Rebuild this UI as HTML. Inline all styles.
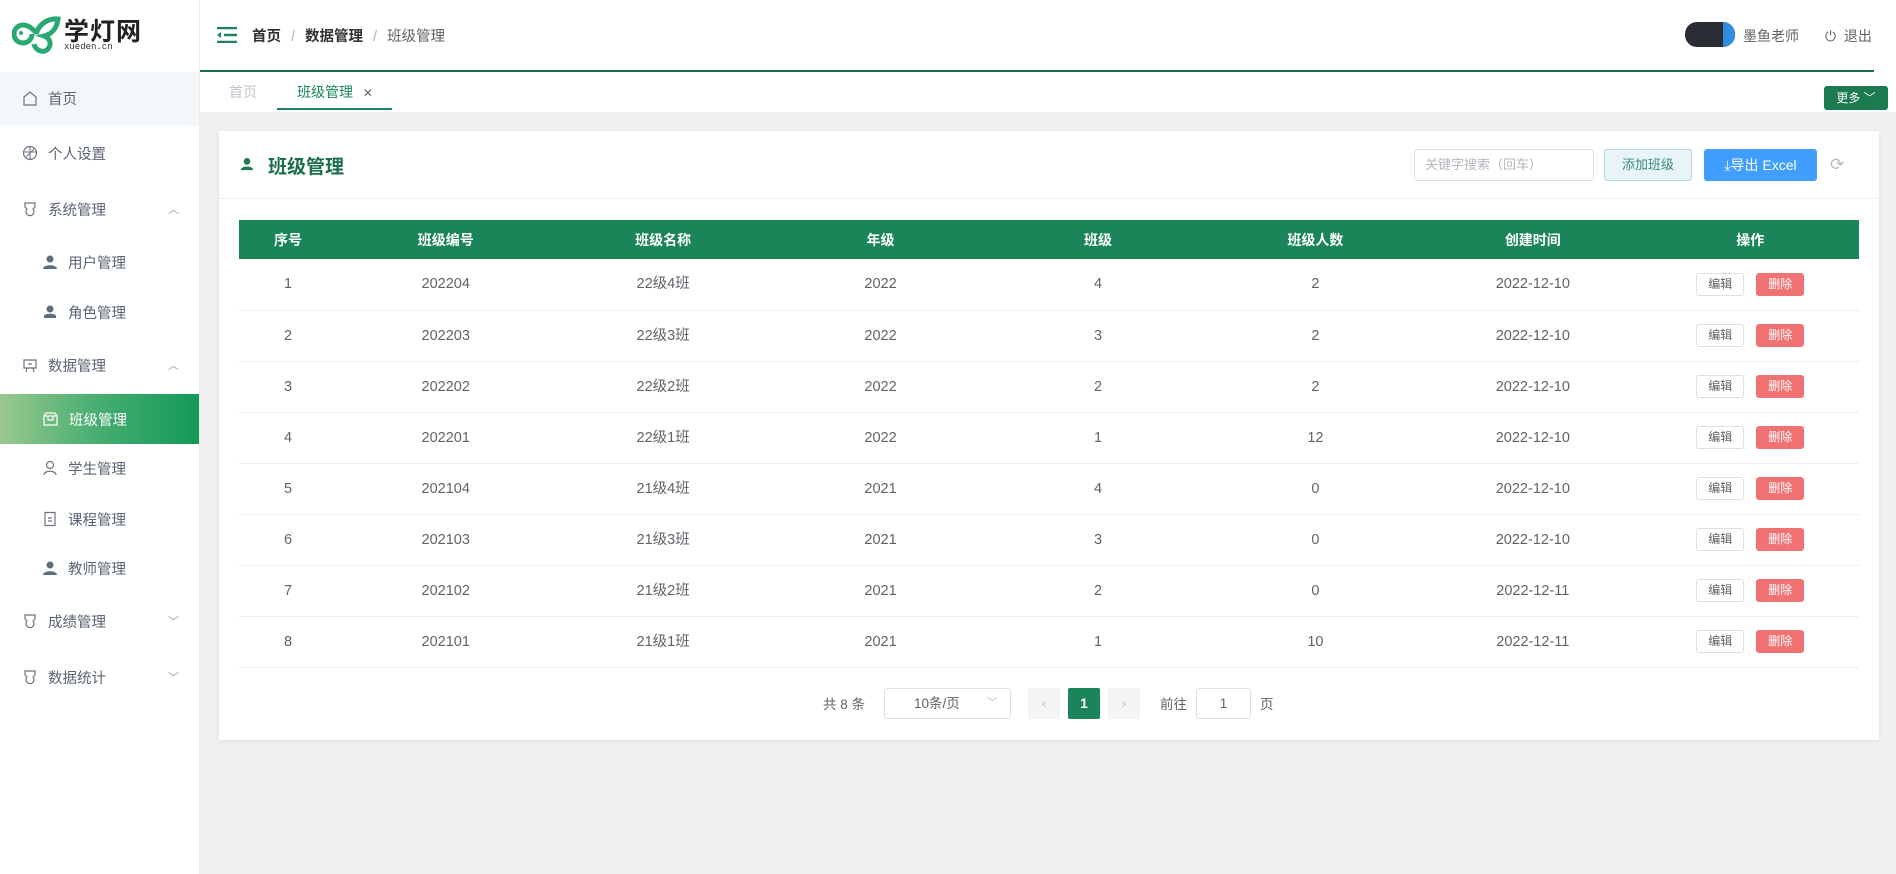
<!DOCTYPE html>
<html><head><meta charset="utf-8"><style>
*{box-sizing:border-box;margin:0;padding:0}
body{width:1896px;height:874px;overflow:hidden;background:#f0f0f0;font-family:"Liberation Sans","Noto Sans CJK SC",sans-serif;font-size:14px;color:#606266;position:relative}
.abs{position:absolute}
.side{left:0;top:0;width:200px;height:874px;background:#fff}
.mi{position:absolute;left:0;width:200px;height:50px;display:flex;align-items:center;font-size:14.5px;color:#5a6472}
.mi svg{margin-right:10px}
.hdr{left:200px;top:0;width:1696px;height:112px;background:#fff}
.card{left:219px;top:131px;width:1660px;height:609px;background:#fff;box-shadow:0 1px 4px rgba(0,0,0,.08)}
table{position:absolute;left:20px;top:89px;width:1620px;border-collapse:collapse;table-layout:fixed}
th{background:#1b8459;color:#fff;height:39px;font-weight:bold;font-size:14px}
td{height:51px;text-align:center;border-bottom:1px solid #ebeef5;font-size:14.5px;color:#5f6368;line-height:20px}
.be{display:inline-block;width:48px;height:23px;border:1px solid #dcdfe6;border-radius:3px;font-size:12px;line-height:21px;color:#606266;background:#fff;vertical-align:middle}
.bd{display:inline-block;width:48px;height:23px;border-radius:3px;font-size:12px;line-height:23px;color:#fff;background:#f07272;margin-left:12px;vertical-align:middle}
</style></head><body>
<div class="abs side">
 <svg class="abs" style="left:12px;top:12px" width="50" height="44" viewBox="0 0 50 44"><path d="M20 22a9 9 0 1 1-9-9c6 0 9 4 14 8" fill="none" stroke="#2aa872" stroke-width="5"/><path d="M24 22c3-10 12-16 22-15-1 9-6 15-14 17 6 2 8 8 4 13-5 5-13 1-14-5" fill="none" stroke="#2aa872" stroke-width="5"/><circle cx="9" cy="21" r="2" fill="#2aa872"/></svg>
 <div class="abs" style="left:64px;top:12px;font-size:25px;font-weight:bold;color:#222;letter-spacing:1px">学灯网</div>
 <div class="abs" style="left:64px;top:42px;font-size:9px;font-family:'Liberation Mono',monospace;color:#333">xueden.cn</div>
 <div class="abs" style="left:0;top:72px;width:200px;height:54px;background:#f4f7fa"></div>
 <div class="mi" style="top:73px;padding-left:22px"><svg width="16" height="16" viewBox="0 0 16 16"><path d="M2 7L8 2l6 5v8H2z" fill="none" stroke="#6b7480" stroke-width="1.2"/></svg>首页</div>
 <div class="mi" style="top:128px;padding-left:22px"><svg width="16" height="16" viewBox="0 0 16 16"><circle cx="8" cy="8" r="6.5" fill="none" stroke="#6b7480" stroke-width="1.2"/><path d="M2 7h12M8 2v12M4 12l8-8" stroke="#6b7480" stroke-width="1"/></svg>个人设置</div>
 <div class="mi" style="top:184px;padding-left:22px"><svg width="16" height="16" viewBox="0 0 16 16"><path d="M3 2h10v4l-2 2a4 4 0 1 1-6 0L3 6z" fill="none" stroke="#6b7480" stroke-width="1.2"/></svg>系统管理<span class="abs" style="left:168px;color:#999;font-size:11px">︿</span></div>
 <div class="mi" style="top:237px;padding-left:42px"><svg width="16" height="16" viewBox="0 0 16 16"><circle cx="8" cy="5" r="3.5" fill="#5b6e80"/><path d="M1 15c0-5 14-5 14 0z" fill="#5b6e80"/></svg>用户管理</div>
 <div class="mi" style="top:287px;padding-left:42px"><svg width="16" height="16" viewBox="0 0 16 16"><circle cx="8" cy="5" r="3.5" fill="#5b6e80"/><path d="M2 12c0-3 12-3 12 0v2H2z" fill="#5b6e80"/></svg>角色管理</div>
 <div class="mi" style="top:340px;padding-left:22px"><svg width="16" height="16" viewBox="0 0 16 16"><path d="M2 3h12v8H2zM5 11l-1 4M11 11l1 4M6 7h4" fill="none" stroke="#6b7480" stroke-width="1.2"/></svg>数据管理<span class="abs" style="left:168px;color:#999;font-size:11px">︿</span></div>
 <div class="abs" style="left:0;top:394px;width:200px;height:50px;background:linear-gradient(90deg,#9ac98f,#4caf73 45%,#129957)"></div>
 <div class="mi" style="top:394px;padding-left:42px;color:#fff"><svg width="17" height="16" viewBox="0 0 17 16"><path d="M2 5h13v9H2zM2 5l2-3h9l2 3M6 5v4h5V5" fill="none" stroke="#fff" stroke-width="1.2"/></svg>班级管理</div>
 <div class="mi" style="top:443px;padding-left:42px"><svg width="16" height="16" viewBox="0 0 16 16"><circle cx="8" cy="5" r="3.5" fill="none" stroke="#6b7480" stroke-width="1.2"/><path d="M2 15c0-5 12-5 12 0" fill="none" stroke="#6b7480" stroke-width="1.2"/></svg>学生管理</div>
 <div class="mi" style="top:494px;padding-left:42px"><svg width="16" height="16" viewBox="0 0 16 16"><path d="M3 1.5h10v13H3zM6 7h4M6 10h4" fill="none" stroke="#6b7480" stroke-width="1.2"/></svg>课程管理</div>
 <div class="mi" style="top:543px;padding-left:42px"><svg width="16" height="16" viewBox="0 0 16 16"><circle cx="8" cy="5" r="3.5" fill="#5b6e80"/><path d="M1 15c0-5 14-5 14 0z" fill="#5b6e80"/></svg>教师管理</div>
 <div class="mi" style="top:596px;padding-left:22px"><svg width="16" height="16" viewBox="0 0 16 16"><path d="M3 2h10v4l-2 2a4 4 0 1 1-6 0L3 6z" fill="none" stroke="#6b7480" stroke-width="1.2"/></svg>成绩管理<span class="abs" style="left:168px;color:#999;font-size:11px">﹀</span></div>
 <div class="mi" style="top:652px;padding-left:22px"><svg width="16" height="16" viewBox="0 0 16 16"><path d="M3 2h10v4l-2 2a4 4 0 1 1-6 0L3 6z" fill="none" stroke="#6b7480" stroke-width="1.2"/></svg>数据统计<span class="abs" style="left:168px;color:#999;font-size:11px">﹀</span></div>
</div>
<div class="abs" style="left:199px;top:0;width:1px;height:874px;background:#eee"></div>
<div class="abs hdr">
 <svg class="abs" style="left:17px;top:27px" width="20" height="16" viewBox="0 0 20 16"><path d="M0 1h20M7 8h13M0 15h20" stroke="#1b8459" stroke-width="2.6"/><path d="M0 8l4-3v6z" fill="#1b8459"/></svg>
 <div class="abs" style="left:52px;top:25px;font-size:14.5px;color:#303133"><b>首页</b><span style="color:#b0b3b8;margin:0 10px">/</span><b>数据管理</b><span style="color:#b0b3b8;margin:0 10px">/</span><span style="color:#606266">班级管理</span></div>
 <div class="abs" style="left:1485px;top:22px;width:50px;height:25px;border-radius:12px;background:#2a2d33;overflow:hidden"><div style="position:absolute;right:0;top:0;width:12px;height:25px;background:#2d8ee0;border-radius:0 12px 12px 0"></div></div>
 <div class="abs" style="left:1543px;top:26px;font-size:14px;color:#606266">墨鱼老师</div>
 <div class="abs" style="left:1625px;top:26px;font-size:14px;color:#606266">⏻ &nbsp;退出</div>
 <div class="abs" style="left:0;top:70px;width:1674px;height:1.5px;background:#1b6e50"></div>
 <div class="abs" style="left:29px;top:82px;font-size:14px;color:#c0c4cc">首页</div>
 <div class="abs" style="left:97px;top:82px;font-size:14px;color:#1b8459">班级管理 <span style="color:#666;font-size:12px;margin-left:6px">✕</span></div>
 <div class="abs" style="left:77px;top:108px;width:115px;height:2px;background:#1b8459"></div>
 <div class="abs" style="left:1624px;top:86px;width:64px;height:24px;background:#1b7a4f;border-radius:3px;color:#fff;font-size:12px;line-height:24px;text-align:center">更多 ﹀</div>
</div>
<div class="abs card">
 <svg class="abs" style="left:21px;top:26px" width="14" height="14" viewBox="0 0 16 16"><circle cx="8" cy="5" r="3.8" fill="#1b7a4f"/><path d="M1 15c0-5.5 14-5.5 14 0z" fill="#1b7a4f"/></svg>
 <div class="abs" style="left:49px;top:21px;font-size:19px;font-weight:bold;color:#1b6e4a">班级管理</div>
 <div class="abs" style="left:1195px;top:18px;width:180px;height:32px;border:1px solid #dcdfe6;border-radius:3px;font-size:13px;color:#b4b7bd;line-height:30px;padding-left:10px">关键字搜索（回车）</div>
 <div class="abs" style="left:1385px;top:18px;width:88px;height:32px;border:1px solid #b3d8de;background:#e8f4f7;border-radius:3px;font-size:13px;color:#3c8a86;line-height:30px;text-align:center">添加班级</div>
 <div class="abs" style="left:1485px;top:18px;width:113px;height:32px;background:#409eff;border-radius:3px;font-size:14px;color:#fff;line-height:32px;text-align:center">⤓导出 Excel</div>
 <div class="abs" style="left:1611px;top:24px;font-size:17px;color:#bbb">⟳</div>
 <div class="abs" style="left:0;top:67px;width:1660px;height:1px;background:#ebeef5"></div>
 <table>
 <colgroup><col style="width:98px"><col span="7"></colgroup>
 <tr><th>序号</th><th>班级编号</th><th>班级名称</th><th>年级</th><th>班级</th><th>班级人数</th><th>创建时间</th><th>操作</th></tr>
 <tr><td>1</td><td>202204</td><td>22级4班</td><td>2022</td><td>4</td><td>2</td><td>2022-12-10</td><td><span class="be">编辑</span><span class="bd">删除</span></td></tr>
 <tr><td>2</td><td>202203</td><td>22级3班</td><td>2022</td><td>3</td><td>2</td><td>2022-12-10</td><td><span class="be">编辑</span><span class="bd">删除</span></td></tr>
 <tr><td>3</td><td>202202</td><td>22级2班</td><td>2022</td><td>2</td><td>2</td><td>2022-12-10</td><td><span class="be">编辑</span><span class="bd">删除</span></td></tr>
 <tr><td>4</td><td>202201</td><td>22级1班</td><td>2022</td><td>1</td><td>12</td><td>2022-12-10</td><td><span class="be">编辑</span><span class="bd">删除</span></td></tr>
 <tr><td>5</td><td>202104</td><td>21级4班</td><td>2021</td><td>4</td><td>0</td><td>2022-12-10</td><td><span class="be">编辑</span><span class="bd">删除</span></td></tr>
 <tr><td>6</td><td>202103</td><td>21级3班</td><td>2021</td><td>3</td><td>0</td><td>2022-12-10</td><td><span class="be">编辑</span><span class="bd">删除</span></td></tr>
 <tr><td>7</td><td>202102</td><td>21级2班</td><td>2021</td><td>2</td><td>0</td><td>2022-12-11</td><td><span class="be">编辑</span><span class="bd">删除</span></td></tr>
 <tr><td>8</td><td>202101</td><td>21级1班</td><td>2021</td><td>1</td><td>10</td><td>2022-12-11</td><td><span class="be">编辑</span><span class="bd">删除</span></td></tr>
 </table>
 <div class="abs" style="left:604px;top:562px;font-size:13.5px;color:#606266">共 8 条</div>
 <div class="abs" style="left:665px;top:557px;width:127px;height:31px;border:1px solid #dcdfe6;border-radius:3px;font-size:13.5px;line-height:29px;padding-left:29px;color:#606266">10条/页<span style="position:absolute;right:12px;color:#bbb;font-size:11px">﹀</span></div>
 <div class="abs" style="left:809px;top:557px;width:32px;height:31px;background:#f4f4f5;color:#c0c4cc;text-align:center;line-height:31px">‹</div>
 <div class="abs" style="left:849px;top:557px;width:32px;height:31px;background:#1b8459;color:#fff;text-align:center;line-height:31px;border-radius:2px;font-weight:bold">1</div>
 <div class="abs" style="left:889px;top:557px;width:32px;height:31px;background:#f4f4f5;color:#c0c4cc;text-align:center;line-height:31px">›</div>
 <div class="abs" style="left:941px;top:562px;font-size:13.5px;color:#606266">前往</div>
 <div class="abs" style="left:977px;top:557px;width:55px;height:31px;border:1px solid #dcdfe6;border-radius:3px;text-align:center;line-height:29px;font-size:13.5px">1</div>
 <div class="abs" style="left:1041px;top:562px;font-size:13.5px;color:#606266">页</div>
</div>
</body></html>
